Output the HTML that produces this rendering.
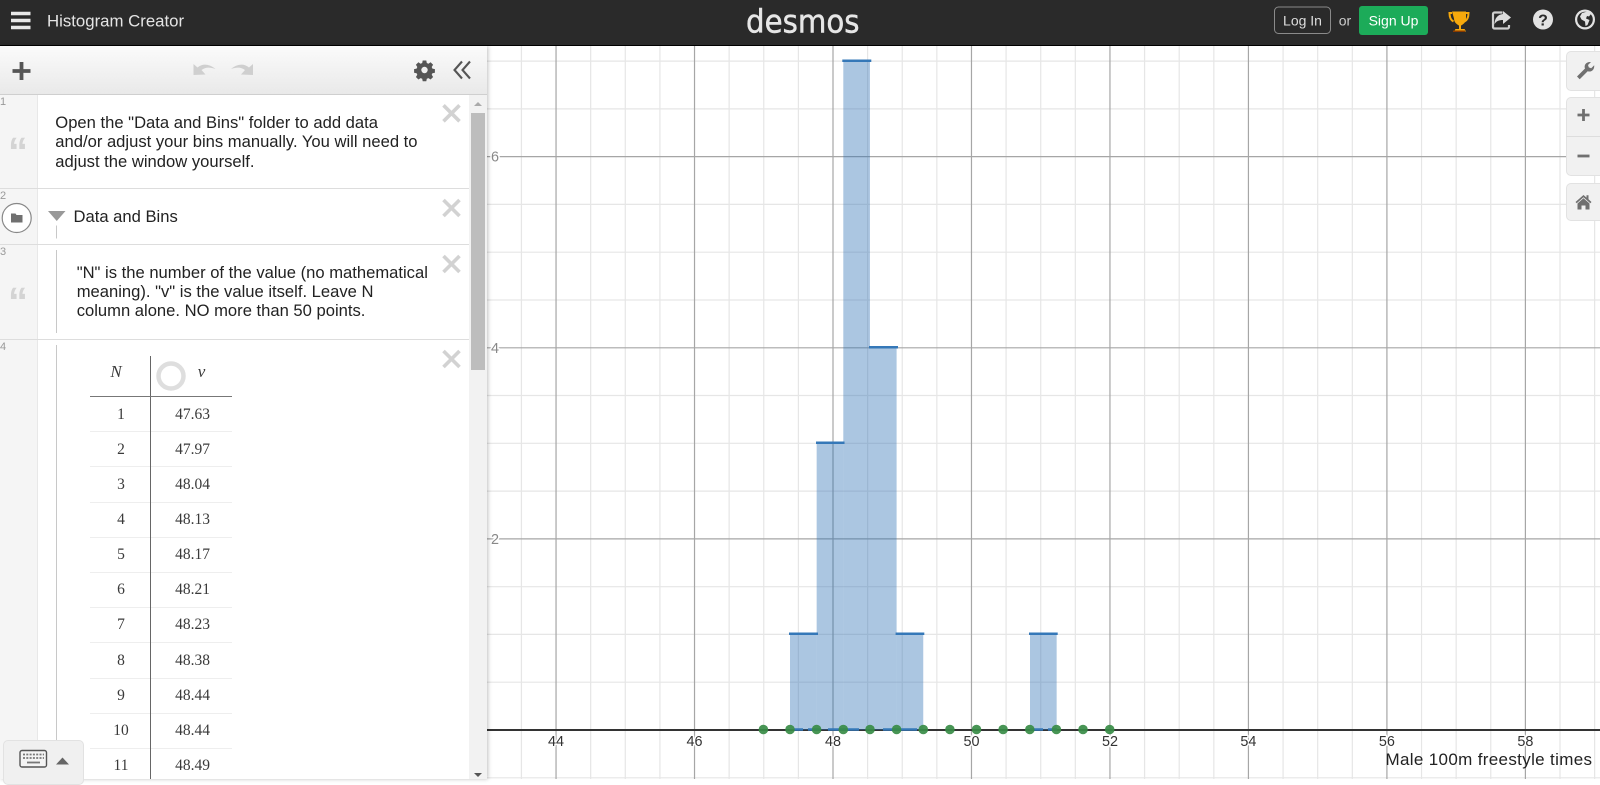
<!DOCTYPE html>
<html><head><meta charset="utf-8"><title>Histogram Creator</title>
<style>
html,body{margin:0;padding:0;width:1600px;height:779px;overflow:hidden;background:#fff;font-family:"Liberation Sans",Arial,sans-serif}
.a{position:absolute}
#hdr{left:0;top:0;width:1600px;height:45px;background:#2a2a2a;border-bottom:1px solid #000;box-sizing:content-box}
#panel{left:0;top:46px;width:487px;height:733px;background:#fff;box-shadow:1px 0 4px rgba(0,0,0,.25);overflow:hidden}
.row{position:absolute;left:0;width:469px;border-bottom:1px solid #ddd;box-sizing:border-box}
.gut{position:absolute;left:0;top:0;bottom:0;width:38px;background:#f5f5f5;border-right:1px solid #e8e8e8;box-sizing:border-box}
.num{position:absolute;left:0;top:1px;font-size:11px;color:#999;line-height:12px}
.q{position:absolute;left:8px;top:37px;font:bold 40px/40px "Liberation Sans",sans-serif;color:#d4d4d4}
.t{position:absolute;font-size:16.6px;line-height:19.4px;color:#222;white-space:nowrap}
.ind{position:absolute;left:56px;width:1px;background:#c8c8c8}
.c1,.c2{position:absolute;font:15.5px/20px "Liberation Serif",serif;color:#3a3a3a;text-align:center}
.c1{left:91px;width:60px}.c2{left:151px;width:83px}
.hl{position:absolute;left:90px;width:142px;height:1px;background:#eee}
.box{position:absolute;left:1566px;width:40px;background:#f1f1f1;border:1px solid #e2e2e2;border-radius:5px;box-sizing:border-box}
</style></head><body>

<svg class="a" style="left:0;top:46px" width="1600" height="733" viewBox="0 46 1600 733">
<g stroke="#e6e6e6" stroke-width="1.2" fill="none">
<path d="M521.42 46V779M590.66 46V779M625.28 46V779M659.9 46V779M729.14 46V779M763.76 46V779M798.38 46V779M867.62 46V779M902.24 46V779M936.86 46V779M1006.1 46V779M1040.72 46V779M1075.34 46V779M1144.58 46V779M1179.2 46V779M1213.82 46V779M1283.06 46V779M1317.68 46V779M1352.3 46V779M1421.54 46V779M1456.16 46V779M1490.78 46V779M1560.02 46V779M1594.64 46V779"/>
<path d="M487 61.1H1600M487 108.9H1600M487 204.4H1600M487 252.2H1600M487 300H1600M487 395.5H1600M487 443.3H1600M487 491.1H1600M487 586.7H1600M487 634.4H1600M487 682.2H1600M487 777.8H1600"/>
</g>
<g stroke="#a6a6a6" stroke-width="1.2" fill="none">
<path d="M556.04 46V779M694.52 46V779M833 46V779M971.48 46V779M1109.96 46V779M1248.44 46V779M1386.92 46V779M1525.4 46V779"/>
<path d="M487 156.6H1600M487 347.8H1600M487 538.9H1600"/>
</g>
<path d="M487 730H1600" stroke="#333" stroke-width="2" fill="none"/>
<g fill="#2d70b3" fill-opacity=".4">
<rect x="790" y="634.4" width="26.65" height="95.6"/>
<rect x="816.65" y="443.3" width="26.65" height="286.7"/>
<rect x="843.3" y="61.1" width="26.65" height="668.9"/>
<rect x="869.95" y="347.8" width="26.65" height="382.2"/>
<rect x="896.6" y="634.4" width="26.65" height="95.6"/>
<rect x="1030" y="634.4" width="26.65" height="95.6"/>
</g>
<g stroke="#3578b8" stroke-width="2.5" fill="none">
<path d="M789 633.8H818M816 442.8H844.5M842.3 60.8H871.3M869 347.3H898M895.6 633.8H924.3M1029 633.8H1057.7"/>
<path d="M794 729.5H803M808 729.5H820M828 729.5H859M883 729.5H917M1030 729.5H1043M1048 729.5H1057"/>
</g>
<g fill="#388c46" fill-opacity=".92">
<circle cx="763.4" cy="729.5" r="4.8"/><circle cx="790" cy="729.5" r="4.8"/><circle cx="816.6" cy="729.5" r="4.8"/><circle cx="843.3" cy="729.5" r="4.8"/><circle cx="870" cy="729.5" r="4.8"/><circle cx="896.6" cy="729.5" r="4.8"/><circle cx="923.3" cy="729.5" r="4.8"/><circle cx="949.9" cy="729.5" r="4.8"/><circle cx="976.5" cy="729.5" r="4.8"/><circle cx="1003.1" cy="729.5" r="4.8"/><circle cx="1029.8" cy="729.5" r="4.8"/><circle cx="1056.4" cy="729.5" r="4.8"/><circle cx="1083" cy="729.5" r="4.8"/><circle cx="1109.7" cy="729.5" r="4.8"/>
</g>
<g font-family="'Liberation Sans',Arial,sans-serif" font-size="14.4" fill="#333" text-anchor="middle" stroke="#fff" stroke-width="3" paint-order="stroke" stroke-linejoin="round">
<text x="556" y="746">44</text><text x="694.5" y="746">46</text><text x="833" y="746">48</text><text x="971.5" y="746">50</text><text x="1110" y="746">52</text><text x="1248.4" y="746">54</text><text x="1386.9" y="746">56</text><text x="1525.4" y="746">58</text>
<text x="495" y="161.5" fill="#888">6</text><text x="495" y="353" fill="#888">4</text><text x="495" y="544" fill="#888">2</text>
</g>
<text x="1385.5" y="765" font-family="'Liberation Sans',Arial,sans-serif" font-size="17" fill="#222" textLength="206.5" lengthAdjust="spacing">Male 100m freestyle times</text>
</svg>

<div class="a" id="hdr"></div>
<svg class="a" style="left:0;top:0" width="1600" height="45">
<path d="M11 13.5H30.500M11 20.5H30.500M11 27.5H30.500" stroke="#e8e8e8" stroke-width="3.4" fill="none"/>
<text x="47" y="26.5" font-family="'Liberation Sans',Arial,sans-serif" font-size="16.8" fill="#e4e4e4">Histogram Creator</text>
<text x="746" y="32.5" font-family="'DejaVu Sans',sans-serif" font-size="32" fill="#e6e6e6" stroke="#e6e6e6" stroke-width=".5" textLength="113.5" lengthAdjust="spacingAndGlyphs">desmos</text>
<rect x="1274.5" y="7" width="56" height="26.5" rx="4" fill="none" stroke="#8a8a8a" stroke-width="1"/>
<text x="1302.5" y="25.5" font-family="'Liberation Sans',Arial,sans-serif" font-size="14" fill="#ddd" text-anchor="middle">Log In</text>
<text x="1345" y="25.5" font-family="'Liberation Sans',Arial,sans-serif" font-size="14" fill="#ccc" text-anchor="middle">or</text>
<rect x="1359" y="6" width="69" height="29" rx="3" fill="#1cab59"/>
<text x="1393.5" y="25.5" font-family="'Liberation Sans',Arial,sans-serif" font-size="14" fill="#fff" text-anchor="middle">Sign Up</text>
<!-- trophy -->
<path d="M1452 11.5h14v7c0 4-3 6-5 7v3.5h3.5l1.5 2.5h-12l1.5-2.5h3.5v-3.5c-2-1-5-3-5-7z" fill="#f7a90c"/>
<path d="M1452 13h-2.500c0 4 1 7 4 8.500M1466 13h2.500c0 4-1 7-4 8.500" fill="none" stroke="#f7a90c" stroke-width="2"/>
<path d="M1453 30.500h12v1.500h-12z" fill="#8a3b00"/>
<!-- share -->
<path d="M1509 25v2a1.500 1.500 0 0 1-1.500 1.500h-13a1.500 1.500 0 0 1-1.500-1.500v-13a1.500 1.500 0 0 1 1.500-1.500h8" fill="none" stroke="#cfcfcf" stroke-width="2.200"/>
<path d="M1503 11l8 6.500-8 6.500v-4c-4 0-7 1-8.500 4.500 0-6 3-10 8.500-10.500z" fill="#dcdcdc"/>
<!-- help -->
<circle cx="1543" cy="19.500" r="10" fill="#e2e2e2"/>
<text x="1543" y="25.500" font-family="'Liberation Sans',Arial,sans-serif" font-size="16" font-weight="bold" fill="#2a2a2a" text-anchor="middle">?</text>
<!-- globe -->
<circle cx="1585" cy="19.500" r="10" fill="#e2e2e2"/>
<circle cx="1585" cy="19.500" r="7.800" fill="#2a2a2a"/>
<path d="M1582 13l5.500-1.500 3.500 2.500-2 2.500-2-.5-1 2.500 3.500 1.500-2 5-2 1-.5-4.500-3.500-2-1.500-3z" fill="#e2e2e2"/>
</svg>

<div class="a" id="panel">
<div class="a" style="left:0;top:0;width:487px;height:48px;background:linear-gradient(#fbfbfb,#e9e9e9);border-bottom:1px solid #cfcfcf;box-sizing:content-box"></div>
<svg class="a" style="left:0;top:0" width="487" height="48">
<path d="M21.500 16v18M12.500 25h18" stroke="#555" stroke-width="3.800" fill="none"/>
<path d="M193.500 29V18l4 3.500c5-4 11-4 18 1.500-6-2-10-2-14 1l4 4.500z" fill="#cfcfcf"/>
<path d="M253 29V18l-4 3.500c-5-4-11-4-18 1.500 6-2 10-2 14 1l-4 4.500z" fill="#cfcfcf"/>
<g transform="translate(424.500 24)" fill="#555">
<path d="M-1.800-9.500h3.600l.5 2.500 1.600.7 2.200-1.400 2.500 2.500-1.400 2.200.7 1.600 2.500.5v3.600l-2.500.5-.7 1.600 1.400 2.200-2.500 2.500-2.200-1.400-1.600.7-.5 2.500h-3.600l-.5-2.500-1.600-.7-2.200 1.400-2.500-2.500 1.400-2.200-.7-1.600-2.500-.5v-3.600l2.500-.5.7-1.600-1.400-2.200 2.500-2.500 2.200 1.400 1.600-.7z"/>
<circle r="3.200" fill="#efefef"/>
</g>
<path d="M462 15.500l-7.500 8.500 7.500 8.500M470 15.500l-7.500 8.500 7.500 8.500" fill="none" stroke="#555" stroke-width="2.100"/>
</svg>

<div class="row" style="top:49px;height:94px">
<div class="gut"><div class="num">1</div><div class="q">“</div></div>
<div class="t" style="left:55.300px;top:18px">Open the "Data and Bins" folder to add data<br>and/or adjust your bins manually. You will need to<br>adjust the window yourself.</div>
</div>
<div class="row" style="top:143px;height:56px">
<div class="gut"><div class="num">2</div></div>
<svg class="a" style="left:0;top:0" width="300" height="56">
<circle cx="16.700" cy="29" r="14.500" fill="#fff" stroke="#888" stroke-width="1.200"/>
<path d="M11 24.500h4.500l1 1.500h6v7.500h-11.500z" fill="#707070"/>
<path d="M48 22h17.500l-8.750 10z" fill="#999"/>
<path d="M56.500 36.500v13" stroke="#c8c8c8" stroke-width="1"/>
<text x="73.500" y="33" font-family="'Liberation Sans',Arial,sans-serif" font-size="16.600" fill="#222">Data and Bins</text>
</svg>
</div>
<div class="row" style="top:199px;height:95px">
<div class="gut"><div class="num">3</div><div class="q">“</div></div>
<div class="ind" style="top:5px;height:83px"></div>
<div class="t" style="left:76.700px;top:17.500px">"N" is the number of the value (no mathematical<br>meaning). "v" is the value itself. Leave N<br>column alone. NO more than 50 points.</div>
</div>
<div class="row" style="top:294px;height:439px;border-bottom:0">
<div class="gut"><div class="num">4</div></div>
<div class="ind" style="top:5px;height:434px"></div>
<div class="hl" style="top:91px"></div><div class="hl" style="top:126px"></div><div class="hl" style="top:161.500px"></div><div class="hl" style="top:196.500px"></div><div class="hl" style="top:232px"></div><div class="hl" style="top:267px"></div><div class="hl" style="top:302px"></div><div class="hl" style="top:337.500px"></div><div class="hl" style="top:372.500px"></div><div class="hl" style="top:408px"></div>
<div class="a" style="left:150px;top:16px;width:1.300px;height:423px;background:#666"></div>
<div class="a" style="left:90px;top:55.500px;width:142px;height:1.300px;background:#777"></div>
<div class="c1" style="top:22px;font-style:italic;font-size:17px;left:86px">N</div>
<svg class="a" style="left:155px;top:20px" width="32" height="32"><circle cx="16" cy="16" r="12.500" fill="#fff" stroke="#dedede" stroke-width="4.500"/></svg>
<div class="c2" style="top:22px;font-style:italic;font-size:17px;left:160px">v</div>
<div class="c1" style="top:65px">1</div><div class="c2" style="top:65px">47.63</div>
<div class="c1" style="top:100px">2</div><div class="c2" style="top:100px">47.97</div>
<div class="c1" style="top:134.500px">3</div><div class="c2" style="top:134.500px">48.04</div>
<div class="c1" style="top:169.500px">4</div><div class="c2" style="top:169.500px">48.13</div>
<div class="c1" style="top:205px">5</div><div class="c2" style="top:205px">48.17</div>
<div class="c1" style="top:240px">6</div><div class="c2" style="top:240px">48.21</div>
<div class="c1" style="top:275px">7</div><div class="c2" style="top:275px">48.23</div>
<div class="c1" style="top:310.500px">8</div><div class="c2" style="top:310.500px">48.38</div>
<div class="c1" style="top:345.500px">9</div><div class="c2" style="top:345.500px">48.44</div>
<div class="c1" style="top:381px">10</div><div class="c2" style="top:381px">48.44</div>
<div class="c1" style="top:416px">11</div><div class="c2" style="top:416px">48.49</div>
</div>

<svg class="a" style="left:441px;top:56px" width="22" height="300" fill="none" stroke="#d2d2d2" stroke-width="3.600">
<path d="M2.500 3.300l16 16M18.500 3.300l-16 16"/>
<path d="M2.500 98l16 16M18.500 98l-16 16"/>
<path d="M2.500 154l16 16M18.500 154l-16 16"/>
<path d="M2.500 249l16 16M18.500 249l-16 16"/>
</svg>

<div class="a" style="left:469px;top:49px;width:18px;height:684px;background:#f2f2f2"></div>
<div class="a" style="left:471px;top:66.500px;width:14px;height:257px;background:#bdbdbd"></div>
<svg class="a" style="left:469px;top:49px" width="18" height="684"><path d="M5 11l4-4 4 4z" fill="#aaa"/><path d="M5 678l4 4 4-4z" fill="#555"/></svg>
</div>

<div class="box" style="top:51px;height:40px"></div>
<div class="box" style="top:97px;height:79px"></div>
<div class="a" style="left:1566px;top:136px;width:34px;height:1px;background:#ddd"></div>
<div class="box" style="top:183px;height:38px"></div>
<svg class="a" style="left:1566px;top:51px" width="34" height="175">
<path d="M11 25.500l8-8c-1.300-3.300 1-7 6-6.500l-3 3 .8 2.400 2.400.8 3-3c.5 4.700-3.200 7.300-6.500 6l-8 8z" fill="#707070"/>
<path d="M17.500 58v12M11.500 64h12" stroke="#707070" stroke-width="2.800" fill="none"/>
<path d="M11.500 105h12" stroke="#707070" stroke-width="2.800" fill="none"/>
<path d="M17.500 144l-8 7 1.200 1.300 6.800-6 6.800 6 1.200-1.300-3-2.700v-4h-2v2.300z" fill="#707070"/>
<path d="M11.500 152.500l6-5.200 6 5.200v6h-4v-4h-4v4h-4z" fill="#707070"/>
</svg>

<div class="a" style="left:3px;top:740px;width:81px;height:45px;background:#f0f0f0;border:1px solid #e2e2e2;border-radius:5px;box-sizing:border-box"></div>
<svg class="a" style="left:0;top:740px" width="90" height="39">
<rect x="20" y="10.500" width="26.500" height="16.500" rx="2" fill="#f4f4f4" stroke="#555" stroke-width="1.400"/>
<path d="M23 14.500h21M23 18h21" stroke="#777" stroke-width="1.800" stroke-dasharray="2 1.300" fill="none"/>
<path d="M27 22.500h13" stroke="#777" stroke-width="1.800" fill="none"/>
<path d="M56 24.500l6.500-7 6.500 7z" fill="#666"/>
</svg>
</body></html>
